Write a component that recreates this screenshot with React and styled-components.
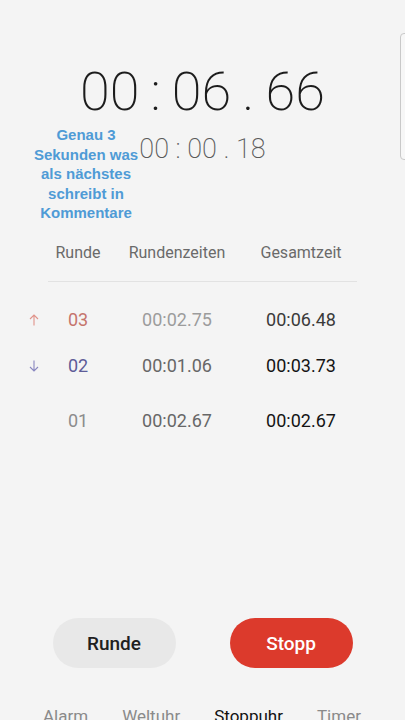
import styled, { createGlobalStyle } from 'styled-components';

const GlobalStyle = createGlobalStyle`
  html, body {
    margin: 0;
    padding: 0;
    background: #f4f4f4;
  }
  * { box-sizing: border-box; }
`;

const Screen = styled.div`
  position: relative;
  width: 405px;
  height: 720px;
  overflow: hidden;
  display: flex;
  flex-direction: column;
  background: #f4f4f4;
  font-family: Roboto, "Noto Sans", sans-serif;
`;

const ScrollHandle = styled.div`
  position: absolute;
  right: -4px;
  top: 33px;
  width: 9px;
  height: 127px;
  border: 1px solid #c9c9c9;
  border-radius: 4px;
  background: #f7f7f7;
`;

const MainTime = styled.div`
  margin-top: 60px;
  height: 64px;
  line-height: 64px;
  font-size: 54px;
  font-weight: 200;
  color: #1c1c1c;
  text-align: center;
  white-space: pre;
`;

const SubTime = styled.div`
  margin-top: 10px;
  height: 30px;
  line-height: 30px;
  font-size: 27px;
  font-weight: 200;
  color: #5a5a5a;
  text-align: center;
  white-space: pre;
`;

const Comment = styled.div`
  position: absolute;
  left: 24px;
  top: 125px;
  width: 124px;
  font-family: "Liberation Sans", Arial, sans-serif;
  font-weight: bold;
  font-size: 15px;
  line-height: 19.5px;
  color: #4f9bd6;
  text-align: center;
`;

const TableRow = styled.div`
  display: grid;
  grid-template-columns: 28px 60px 138px 110px;
  padding-left: 20px;
  height: ${({h}) => h}px;
  margin-top: ${({mt}) => mt || 0}px;
  align-items: center;
`;

const Cell = styled.div`
  text-align: center;
  font-size: ${({size}) => size || 18}px;
  line-height: 20px;
  color: ${({color}) => color || '#666'};
  display: flex;
  justify-content: center;
  white-space: nowrap;
`;

const Divider = styled.div`
  height: 1px;
  margin: 18px 48px 15px 48px;
  background: #e2e2e2;
`;

const ButtonRow = styled.div`
  margin-top: auto;
  display: flex;
  justify-content: center;
  gap: 54px;
`;

const Button = styled.div`
  width: 123px;
  height: 50px;
  border-radius: 25px;
  display: flex;
  align-items: center;
  justify-content: center;
  font-size: 19px;
  font-weight: 500;
  background: ${({primary}) => (primary ? '#dc3a2c' : '#e8e8e8')};
  color: ${({primary}) => (primary ? '#ffffff' : '#202020')};
`;

const Tabs = styled.div`
  height: 52px;
  padding: 38px 0 0 43px;
  display: flex;
  gap: 34px;
  overflow: hidden;
`;

const Tab = styled.div`
  font-size: 17px;
  line-height: 20px;
  color: ${({active}) => (active ? '#111' : '#8a8a8a')};
  white-space: nowrap;
`;

const Arrow = ({up, color}) => (
  <svg width="10" height="12" viewBox="0 0 10 12">
    {up ? (
      <path d="M5 11.5V1M1 5l4-4 4 4" stroke={color} strokeWidth="1.1" fill="none" />
    ) : (
      <path d="M5 0.5V11M1 7l4 4 4-4" stroke={color} strokeWidth="1.1" fill="none" />
    )}
  </svg>
);

const laps = [
  { arrow: 'up', nr: '03', nrColor: '#c5746c', lap: '00:02.75', lapColor: '#9c9c9c', total: '00:06.48', totalColor: '#3a3a3a' },
  { arrow: 'down', nr: '02', nrColor: '#5e5c98', lap: '00:01.06', lapColor: '#676767', total: '00:03.73', totalColor: '#141414' },
  { arrow: null, nr: '01', nrColor: '#8c8c8c', lap: '00:02.67', lapColor: '#676767', total: '00:02.67', totalColor: '#141414', mt: 9 },
];

export default function App() {
  return (
    <>
      <GlobalStyle />
      <Screen>
        <ScrollHandle />
        <MainTime>{'00\u2009:\u200906\u2009.\u200966'}</MainTime>
        <SubTime>{'00 : 00 . 18'}</SubTime>

        <TableRow h={20} mt={79}>
          <Cell />
          <Cell size={16} color="#6a6a6a">Runde</Cell>
          <Cell size={16} color="#6a6a6a">Rundenzeiten</Cell>
          <Cell size={16} color="#6a6a6a">Gesamtzeit</Cell>
        </TableRow>
        <Divider />

        {laps.map((l) => (
          <TableRow key={l.nr} h={46} mt={l.mt}>
            <Cell>
              {l.arrow && <Arrow up={l.arrow === 'up'} color={l.arrow === 'up' ? '#e0938a' : '#8a88c0'} />}
            </Cell>
            <Cell color={l.nrColor}>{l.nr}</Cell>
            <Cell color={l.lapColor}>{l.lap}</Cell>
            <Cell color={l.totalColor}>{l.total}</Cell>
          </TableRow>
        ))}

        <ButtonRow>
          <Button>Runde</Button>
          <Button primary>Stopp</Button>
        </ButtonRow>

        <Tabs>
          <Tab>Alarm</Tab>
          <Tab>Weltuhr</Tab>
          <Tab active>Stoppuhr</Tab>
          <Tab>Timer</Tab>
        </Tabs>

        <Comment>
          Genau 3<br />Sekunden was<br />als nächstes<br />schreibt in<br />Kommentare
        </Comment>
      </Screen>
    </>
  );
}
